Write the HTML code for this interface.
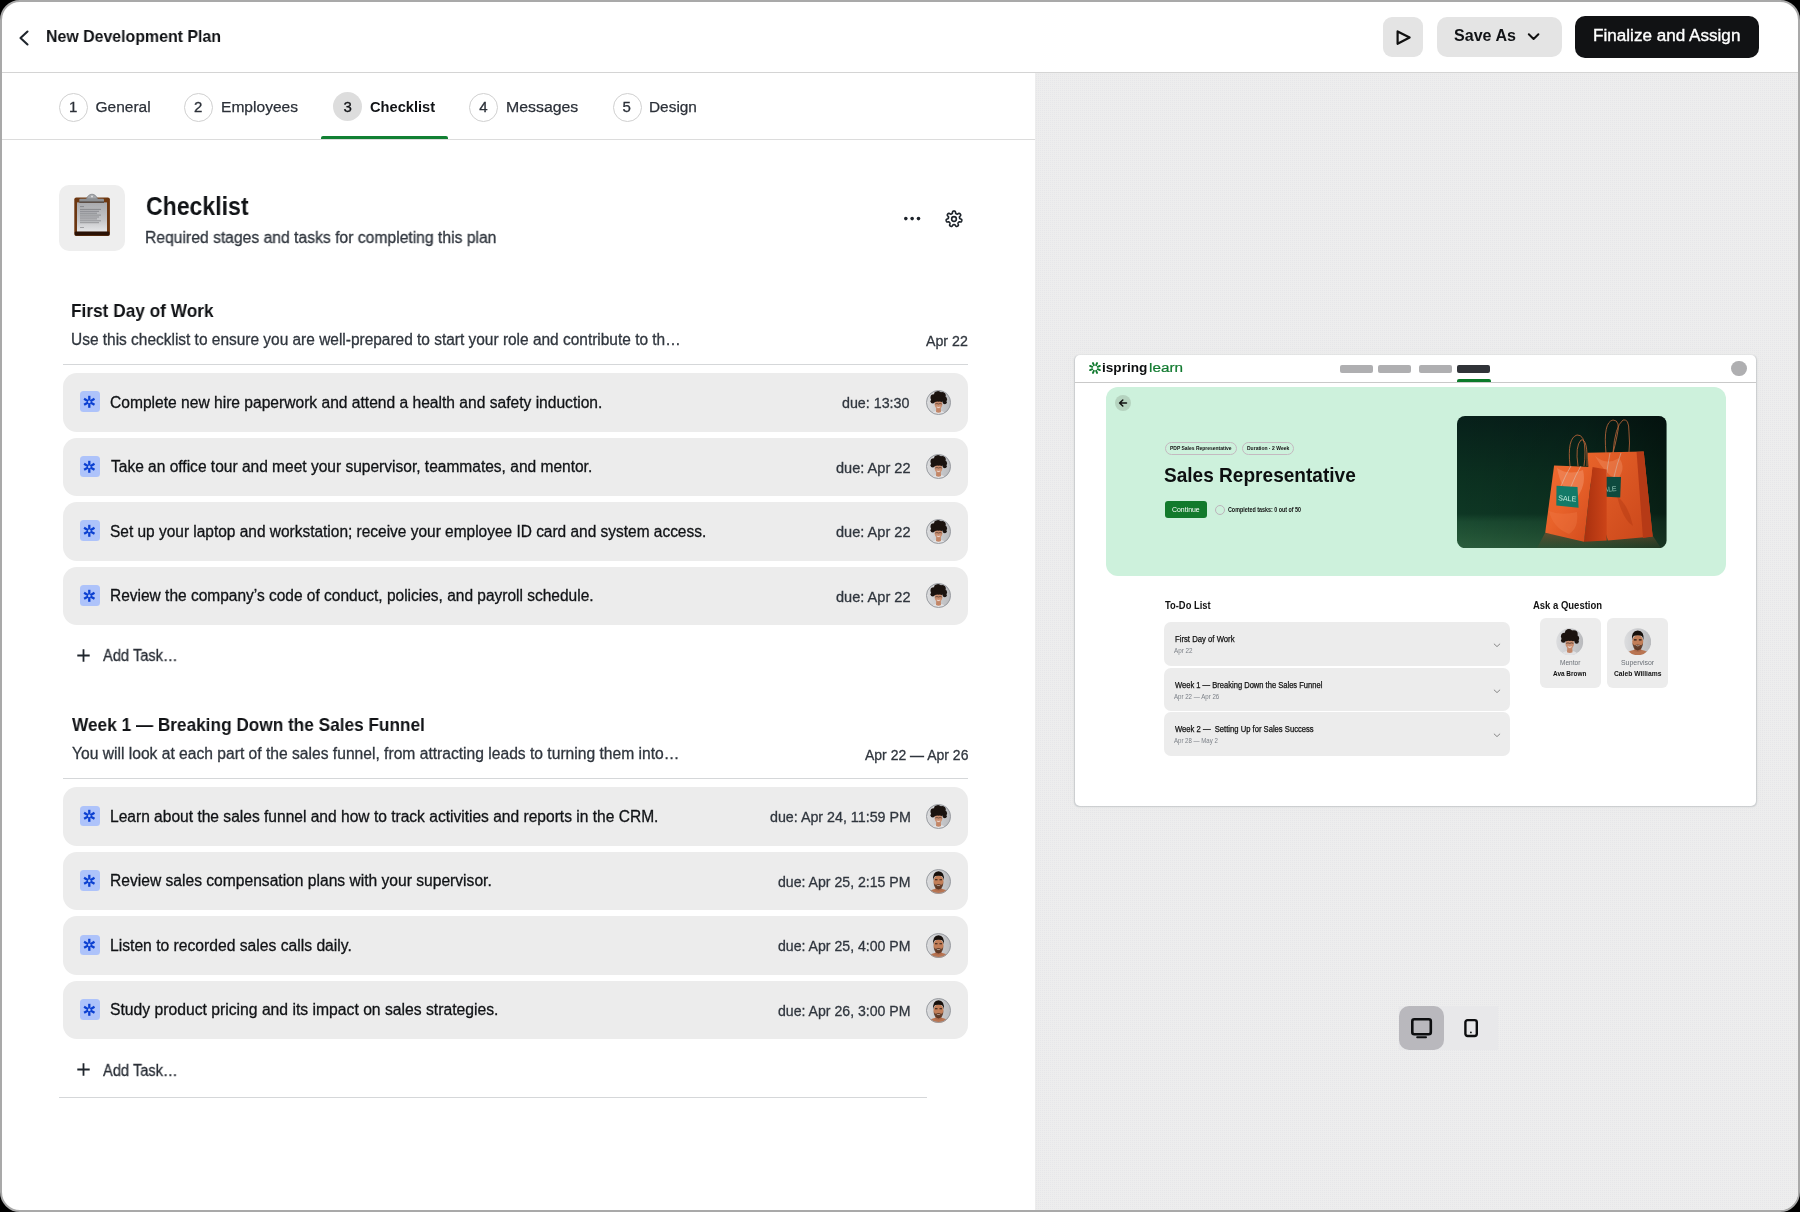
<!DOCTYPE html>
<html><head><meta charset="utf-8">
<style>
html,body{margin:0;padding:0;width:1800px;height:1212px;overflow:hidden;background:#000;}
body{font-family:"Liberation Sans",sans-serif;}
#frame{position:absolute;left:0;top:0;width:1800px;height:1212px;box-sizing:border-box;border:2px solid #a9a9a9;border-radius:20px;overflow:hidden;background:#fff;}
#root{position:absolute;left:-2px;top:-2px;width:1800px;height:1212px;will-change:transform;}
.t{position:absolute;white-space:pre;}
</style></head>
<body>
<div id="frame"><div id="root">
<div style="position:absolute;left:1035px;top:73px;width:765px;height:1139px;background-color:#ededed;background-image:linear-gradient(90deg,transparent 1px,#ededed 1px),linear-gradient(#e6e6e9 1px,#ededed 1px);background-size:2px 2px;background-position:1px 1px;"></div>
<div style="position:absolute;left:0px;top:72px;width:1800px;height:1px;background:#d4d4d4;border-radius:0;"></div>
<div style="position:absolute;left:0px;top:139px;width:1035px;height:1px;background:#dcdcdc;border-radius:0;"></div>
<svg style="position:absolute;left:16px;top:28px;" width="16" height="20" viewBox="0 0 16 20"><polyline points="11.5,3.5 4.5,10 11.5,16.5" fill="none" stroke="#1f252c" stroke-width="2.1" stroke-linecap="round" stroke-linejoin="round"/></svg>
<div style="position:absolute;left:1383px;top:17px;width:40px;height:40px;background:#e4e4e4;border-radius:9px;"></div>
<svg style="position:absolute;left:1390px;top:24px;" width="26" height="26" viewBox="0 0 26 26"><path d="M7.6,7.4 L19.6,13.5 L7.6,19.8 Z" fill="none" stroke="#111" stroke-width="2.2" stroke-linejoin="round"/></svg>
<div style="position:absolute;left:1437px;top:17px;width:125px;height:40px;background:#e4e4e4;border-radius:10px;"></div>
<svg style="position:absolute;left:1524px;top:29px;" width="20" height="16" viewBox="0 0 20 16"><polyline points="4.8,5.2 9.6,10 14.4,5.2" fill="none" stroke="#111" stroke-width="2" stroke-linecap="round" stroke-linejoin="round"/></svg>
<div style="position:absolute;left:1575px;top:16px;width:184px;height:42px;background:#111214;border-radius:10px;"></div>
<div style="position:absolute;left:59.0px;top:92.5px;width:29px;height:29px;box-sizing:border-box;border-radius:50%;border:1px solid #cfcfcf;"></div>
<div style="position:absolute;left:184.0px;top:92.5px;width:29px;height:29px;box-sizing:border-box;border-radius:50%;border:1px solid #cfcfcf;"></div>
<div style="position:absolute;left:333.0px;top:92.1px;width:29px;height:29px;border-radius:50%;background:#dddddd;"></div>
<div style="position:absolute;left:468.8px;top:92.5px;width:29px;height:29px;box-sizing:border-box;border-radius:50%;border:1px solid #cfcfcf;"></div>
<div style="position:absolute;left:612.6px;top:92.5px;width:29px;height:29px;box-sizing:border-box;border-radius:50%;border:1px solid #cfcfcf;"></div>
<div style="position:absolute;left:320.7px;top:136.3px;width:127.5px;height:3.2px;background:#118033;border-radius:2px 2px 0 0;"></div>
<div style="position:absolute;left:59px;top:185px;width:66px;height:66px;background:#eeeeee;border-radius:10px;"></div>
<svg style="position:absolute;left:59px;top:185px;" width="66" height="66" viewBox="0 0 66 66">
<defs><linearGradient id="brd" x1="0" y1="0" x2="1" y2="0"><stop offset="0" stop-color="#6a3510"/><stop offset="0.5" stop-color="#7e4416"/><stop offset="1" stop-color="#6a3510"/></linearGradient>
<linearGradient id="ppr" x1="0" y1="0" x2="0" y2="1"><stop offset="0" stop-color="#a9aaae"/><stop offset="0.6" stop-color="#c4c5c8"/><stop offset="1" stop-color="#e6e7e9"/></linearGradient></defs>
<rect x="15.3" y="12.4" width="35.6" height="38.5" rx="2" fill="url(#brd)"/>
<rect x="18" y="17.4" width="30" height="29.5" fill="url(#ppr)"/>
<rect x="15.8" y="46.6" width="34.6" height="4" rx="1" fill="#2a1206"/>
<g stroke="#55575c" stroke-width="0.55" opacity="0.85">
<line x1="21" y1="21.6" x2="25" y2="21.6"/><line x1="21" y1="24.40" x2="42" y2="24.40"/><line x1="21" y1="26.30" x2="40" y2="26.30"/><line x1="21" y1="28.20" x2="38" y2="28.20"/><line x1="21" y1="30.10" x2="42" y2="30.10"/><line x1="21" y1="32.00" x2="40" y2="32.00"/><line x1="21" y1="33.90" x2="38" y2="33.90"/><line x1="21" y1="35.80" x2="42" y2="35.80"/><line x1="21" y1="37.70" x2="40" y2="37.70"/><line x1="21" y1="42.6" x2="25" y2="42.6"/>
</g>
<path d="M27.4,14 Q29,9.4 33,9.2 Q37,9.4 38.6,14 Z" fill="#a4a7ab" stroke="#6f7277" stroke-width="0.6"/>
<circle cx="33" cy="11.6" r="1" fill="#e0e0e0"/>
<rect x="20.3" y="13.7" width="24.7" height="3.7" rx="1" fill="#8d9094"/>
<rect x="20.3" y="16.6" width="24.7" height="1" fill="#3a2a20"/>
</svg>
<svg style="position:absolute;left:900px;top:212px;" width="24" height="14" viewBox="0 0 24 14"><circle cx="5.8" cy="6.6" r="1.8" fill="#1d232a"/><circle cx="12.149999999999999" cy="6.6" r="1.8" fill="#1d232a"/><circle cx="18.5" cy="6.6" r="1.8" fill="#1d232a"/></svg>
<svg style="position:absolute;left:943.7px;top:208.7px;" width="20" height="20" viewBox="0 0 20 20"><path d="M16.80,10.00 L17.19,10.16 L17.49,10.34 L17.68,10.52 L17.78,10.70 L17.83,10.88 L17.84,11.06 L17.84,11.24 L17.82,11.42 L17.79,11.59 L17.75,11.77 L17.71,11.94 L17.66,12.11 L17.60,12.28 L17.53,12.45 L17.44,12.60 L17.32,12.75 L17.14,12.87 L16.89,12.95 L16.55,12.97 L16.13,12.95 L15.71,12.91 L15.37,12.89 L15.13,12.91 L14.97,12.97 L14.84,13.04 L14.75,13.13 L14.66,13.23 L14.58,13.32 L14.50,13.42 L14.42,13.52 L14.34,13.62 L14.26,13.72 L14.18,13.82 L14.11,13.93 L14.05,14.05 L14.00,14.18 L13.98,14.36 L14.02,14.60 L14.11,14.92 L14.24,15.32 L14.36,15.72 L14.41,16.07 L14.38,16.33 L14.30,16.52 L14.19,16.67 L14.06,16.79 L13.91,16.90 L13.76,16.99 L13.61,17.08 L13.45,17.16 L13.29,17.24 L13.12,17.30 L12.95,17.36 L12.78,17.41 L12.60,17.44 L12.41,17.43 L12.21,17.37 L11.99,17.23 L11.76,16.97 L11.51,16.63 L11.29,16.28 L11.09,16.00 L10.92,15.83 L10.78,15.73 L10.64,15.69 L10.51,15.66 L10.38,15.65 L10.25,15.65 L10.13,15.65 L10.00,15.65 L9.87,15.65 L9.75,15.65 L9.62,15.65 L9.49,15.66 L9.36,15.69 L9.22,15.73 L9.08,15.83 L8.91,16.00 L8.71,16.28 L8.49,16.63 L8.24,16.97 L8.01,17.23 L7.79,17.37 L7.59,17.43 L7.40,17.44 L7.22,17.41 L7.05,17.36 L6.88,17.30 L6.71,17.24 L6.55,17.16 L6.39,17.08 L6.24,16.99 L6.09,16.90 L5.94,16.79 L5.81,16.67 L5.70,16.52 L5.62,16.33 L5.59,16.07 L5.64,15.72 L5.76,15.32 L5.89,14.92 L5.98,14.60 L6.02,14.36 L6.00,14.18 L5.95,14.05 L5.89,13.93 L5.82,13.82 L5.74,13.72 L5.66,13.62 L5.58,13.52 L5.50,13.42 L5.42,13.32 L5.34,13.23 L5.25,13.13 L5.16,13.04 L5.03,12.97 L4.87,12.91 L4.63,12.89 L4.29,12.91 L3.87,12.95 L3.45,12.97 L3.11,12.95 L2.86,12.87 L2.68,12.75 L2.56,12.60 L2.47,12.45 L2.40,12.28 L2.34,12.11 L2.29,11.94 L2.25,11.77 L2.21,11.59 L2.18,11.42 L2.16,11.24 L2.16,11.06 L2.17,10.88 L2.22,10.70 L2.32,10.52 L2.51,10.34 L2.81,10.16 L3.20,10.00 L3.59,9.86 L3.90,9.73 L4.11,9.60 L4.24,9.48 L4.31,9.36 L4.36,9.24 L4.40,9.11 L4.43,8.99 L4.46,8.87 L4.49,8.74 L4.52,8.62 L4.55,8.50 L4.57,8.37 L4.59,8.24 L4.60,8.11 L4.58,7.97 L4.52,7.80 L4.39,7.60 L4.16,7.35 L3.87,7.05 L3.59,6.74 L3.40,6.45 L3.31,6.20 L3.29,5.99 L3.33,5.81 L3.40,5.64 L3.48,5.48 L3.57,5.33 L3.68,5.18 L3.78,5.04 L3.90,4.91 L4.02,4.77 L4.14,4.65 L4.28,4.53 L4.43,4.43 L4.60,4.35 L4.81,4.32 L5.07,4.35 L5.39,4.48 L5.76,4.68 L6.12,4.90 L6.41,5.06 L6.64,5.15 L6.81,5.17 L6.96,5.16 L7.08,5.12 L7.20,5.07 L7.32,5.02 L7.43,4.96 L7.55,4.91 L7.66,4.85 L7.78,4.80 L7.89,4.74 L8.00,4.68 L8.11,4.60 L8.21,4.50 L8.30,4.35 L8.38,4.12 L8.43,3.78 L8.49,3.37 L8.56,2.96 L8.66,2.62 L8.80,2.40 L8.95,2.26 L9.12,2.17 L9.29,2.12 L9.47,2.09 L9.64,2.06 L9.82,2.05 L10.00,2.05 L10.18,2.05 L10.36,2.06 L10.53,2.09 L10.71,2.12 L10.88,2.17 L11.05,2.26 L11.20,2.40 L11.34,2.62 L11.44,2.96 L11.51,3.37 L11.57,3.78 L11.62,4.12 L11.70,4.35 L11.79,4.50 L11.89,4.60 L12.00,4.68 L12.11,4.74 L12.22,4.80 L12.34,4.85 L12.45,4.91 L12.57,4.96 L12.68,5.02 L12.80,5.07 L12.92,5.12 L13.04,5.16 L13.19,5.17 L13.36,5.15 L13.59,5.06 L13.88,4.90 L14.24,4.68 L14.61,4.48 L14.93,4.35 L15.19,4.32 L15.40,4.35 L15.57,4.43 L15.72,4.53 L15.86,4.65 L15.98,4.77 L16.10,4.91 L16.22,5.04 L16.32,5.18 L16.43,5.33 L16.52,5.48 L16.60,5.64 L16.67,5.81 L16.71,5.99 L16.69,6.20 L16.60,6.45 L16.41,6.74 L16.13,7.05 L15.84,7.35 L15.61,7.60 L15.48,7.80 L15.42,7.97 L15.40,8.11 L15.41,8.24 L15.43,8.37 L15.45,8.50 L15.48,8.62 L15.51,8.74 L15.54,8.87 L15.57,8.99 L15.60,9.11 L15.64,9.24 L15.69,9.36 L15.76,9.48 L15.89,9.60 L16.10,9.73 L16.41,9.86 Z" fill="none" stroke="#1d232a" stroke-width="1.6" stroke-linejoin="round"/><circle cx="10" cy="10" r="2.35" fill="none" stroke="#1d232a" stroke-width="1.6"/></svg>
<div style="position:absolute;left:63px;top:364px;width:905px;height:1px;background:#d5d7d9;border-radius:0;"></div>
<div style="position:absolute;left:63px;top:373.2px;width:905px;height:58.4px;background:#ececec;border-radius:14px;"></div>
<div style="position:absolute;left:79.7px;top:391.4px;width:20.5px;height:20.6px;background:#aec3fa;border-radius:3.5px;"></div>
<svg style="position:absolute;left:79.6px;top:391.2px;" width="20.6" height="21" viewBox="0 0 20.6 21"><g stroke="#0a3fd1" stroke-width="2.3" stroke-linecap="butt"><line x1="9.30" y1="12.10" x2="9.30" y2="16.80"/><line x1="8.17" y1="11.45" x2="4.10" y2="13.80"/><line x1="8.17" y1="10.15" x2="4.10" y2="7.80"/><line x1="9.30" y1="9.50" x2="9.30" y2="4.80"/><line x1="10.43" y1="10.15" x2="14.50" y2="7.80"/><line x1="10.43" y1="11.45" x2="14.50" y2="13.80"/></g></svg>
<svg style="position:absolute;left:926.3px;top:389.9px;" width="25" height="25" viewBox="0 0 100 100"><defs><linearGradient id="ag1" x1="0" y1="0" x2="1" y2="0"><stop offset="0" stop-color="#dcdddf"/><stop offset="1" stop-color="#b9babd"/></linearGradient><clipPath id="ac1"><circle cx="50" cy="50" r="49"/></clipPath></defs><g clip-path="url(#ac1)"><rect width="100" height="100" fill="url(#ag1)"/>
<path d="M18,100 Q24,86 40,84 L60,84 Q76,86 82,100 Z" fill="#e2e2e4"/>
<path d="M41,68 L59,68 L60,88 Q50,93 40,88 Z" fill="#c28566"/>
<ellipse cx="50" cy="57" rx="15.5" ry="18" fill="#c98e70"/>
<g fill="#1b130f"><circle cx="31" cy="30" r="13"/><circle cx="47" cy="19" r="15"/><circle cx="65" cy="22" r="14"/><circle cx="73" cy="37" r="11"/><circle cx="27" cy="45" r="9"/><circle cx="75" cy="49" r="8"/><circle cx="50" cy="35" r="12"/><circle cx="38" cy="40" r="8"/><circle cx="62" cy="40" r="8"/></g>
<path d="M37,56 Q43.5,52 50,56 Q56.5,52 63,56" fill="none" stroke="#3a2a22" stroke-width="2.5"/>
<path d="M43,68 Q50,73 57,68 Q50,70.5 43,68 Z" fill="#fff" stroke="#f3e9e4" stroke-width="1.5"/></g><circle cx="50" cy="50" r="48" fill="none" stroke="#9a9da2" stroke-width="4"/></svg>
<div style="position:absolute;left:63px;top:437.73px;width:905px;height:58.4px;background:#ececec;border-radius:14px;"></div>
<div style="position:absolute;left:79.7px;top:455.93px;width:20.5px;height:20.6px;background:#aec3fa;border-radius:3.5px;"></div>
<svg style="position:absolute;left:79.6px;top:455.73px;" width="20.6" height="21" viewBox="0 0 20.6 21"><g stroke="#0a3fd1" stroke-width="2.3" stroke-linecap="butt"><line x1="9.30" y1="12.10" x2="9.30" y2="16.80"/><line x1="8.17" y1="11.45" x2="4.10" y2="13.80"/><line x1="8.17" y1="10.15" x2="4.10" y2="7.80"/><line x1="9.30" y1="9.50" x2="9.30" y2="4.80"/><line x1="10.43" y1="10.15" x2="14.50" y2="7.80"/><line x1="10.43" y1="11.45" x2="14.50" y2="13.80"/></g></svg>
<svg style="position:absolute;left:926.3px;top:454.43px;" width="25" height="25" viewBox="0 0 100 100"><defs><linearGradient id="ag2" x1="0" y1="0" x2="1" y2="0"><stop offset="0" stop-color="#dcdddf"/><stop offset="1" stop-color="#b9babd"/></linearGradient><clipPath id="ac2"><circle cx="50" cy="50" r="49"/></clipPath></defs><g clip-path="url(#ac2)"><rect width="100" height="100" fill="url(#ag2)"/>
<path d="M18,100 Q24,86 40,84 L60,84 Q76,86 82,100 Z" fill="#e2e2e4"/>
<path d="M41,68 L59,68 L60,88 Q50,93 40,88 Z" fill="#c28566"/>
<ellipse cx="50" cy="57" rx="15.5" ry="18" fill="#c98e70"/>
<g fill="#1b130f"><circle cx="31" cy="30" r="13"/><circle cx="47" cy="19" r="15"/><circle cx="65" cy="22" r="14"/><circle cx="73" cy="37" r="11"/><circle cx="27" cy="45" r="9"/><circle cx="75" cy="49" r="8"/><circle cx="50" cy="35" r="12"/><circle cx="38" cy="40" r="8"/><circle cx="62" cy="40" r="8"/></g>
<path d="M37,56 Q43.5,52 50,56 Q56.5,52 63,56" fill="none" stroke="#3a2a22" stroke-width="2.5"/>
<path d="M43,68 Q50,73 57,68 Q50,70.5 43,68 Z" fill="#fff" stroke="#f3e9e4" stroke-width="1.5"/></g><circle cx="50" cy="50" r="48" fill="none" stroke="#9a9da2" stroke-width="4"/></svg>
<div style="position:absolute;left:63px;top:502.26px;width:905px;height:58.4px;background:#ececec;border-radius:14px;"></div>
<div style="position:absolute;left:79.7px;top:520.46px;width:20.5px;height:20.6px;background:#aec3fa;border-radius:3.5px;"></div>
<svg style="position:absolute;left:79.6px;top:520.26px;" width="20.6" height="21" viewBox="0 0 20.6 21"><g stroke="#0a3fd1" stroke-width="2.3" stroke-linecap="butt"><line x1="9.30" y1="12.10" x2="9.30" y2="16.80"/><line x1="8.17" y1="11.45" x2="4.10" y2="13.80"/><line x1="8.17" y1="10.15" x2="4.10" y2="7.80"/><line x1="9.30" y1="9.50" x2="9.30" y2="4.80"/><line x1="10.43" y1="10.15" x2="14.50" y2="7.80"/><line x1="10.43" y1="11.45" x2="14.50" y2="13.80"/></g></svg>
<svg style="position:absolute;left:926.3px;top:518.96px;" width="25" height="25" viewBox="0 0 100 100"><defs><linearGradient id="ag3" x1="0" y1="0" x2="1" y2="0"><stop offset="0" stop-color="#dcdddf"/><stop offset="1" stop-color="#b9babd"/></linearGradient><clipPath id="ac3"><circle cx="50" cy="50" r="49"/></clipPath></defs><g clip-path="url(#ac3)"><rect width="100" height="100" fill="url(#ag3)"/>
<path d="M18,100 Q24,86 40,84 L60,84 Q76,86 82,100 Z" fill="#e2e2e4"/>
<path d="M41,68 L59,68 L60,88 Q50,93 40,88 Z" fill="#c28566"/>
<ellipse cx="50" cy="57" rx="15.5" ry="18" fill="#c98e70"/>
<g fill="#1b130f"><circle cx="31" cy="30" r="13"/><circle cx="47" cy="19" r="15"/><circle cx="65" cy="22" r="14"/><circle cx="73" cy="37" r="11"/><circle cx="27" cy="45" r="9"/><circle cx="75" cy="49" r="8"/><circle cx="50" cy="35" r="12"/><circle cx="38" cy="40" r="8"/><circle cx="62" cy="40" r="8"/></g>
<path d="M37,56 Q43.5,52 50,56 Q56.5,52 63,56" fill="none" stroke="#3a2a22" stroke-width="2.5"/>
<path d="M43,68 Q50,73 57,68 Q50,70.5 43,68 Z" fill="#fff" stroke="#f3e9e4" stroke-width="1.5"/></g><circle cx="50" cy="50" r="48" fill="none" stroke="#9a9da2" stroke-width="4"/></svg>
<div style="position:absolute;left:63px;top:566.79px;width:905px;height:58.4px;background:#ececec;border-radius:14px;"></div>
<div style="position:absolute;left:79.7px;top:584.99px;width:20.5px;height:20.6px;background:#aec3fa;border-radius:3.5px;"></div>
<svg style="position:absolute;left:79.6px;top:584.79px;" width="20.6" height="21" viewBox="0 0 20.6 21"><g stroke="#0a3fd1" stroke-width="2.3" stroke-linecap="butt"><line x1="9.30" y1="12.10" x2="9.30" y2="16.80"/><line x1="8.17" y1="11.45" x2="4.10" y2="13.80"/><line x1="8.17" y1="10.15" x2="4.10" y2="7.80"/><line x1="9.30" y1="9.50" x2="9.30" y2="4.80"/><line x1="10.43" y1="10.15" x2="14.50" y2="7.80"/><line x1="10.43" y1="11.45" x2="14.50" y2="13.80"/></g></svg>
<svg style="position:absolute;left:926.3px;top:583.49px;" width="25" height="25" viewBox="0 0 100 100"><defs><linearGradient id="ag4" x1="0" y1="0" x2="1" y2="0"><stop offset="0" stop-color="#dcdddf"/><stop offset="1" stop-color="#b9babd"/></linearGradient><clipPath id="ac4"><circle cx="50" cy="50" r="49"/></clipPath></defs><g clip-path="url(#ac4)"><rect width="100" height="100" fill="url(#ag4)"/>
<path d="M18,100 Q24,86 40,84 L60,84 Q76,86 82,100 Z" fill="#e2e2e4"/>
<path d="M41,68 L59,68 L60,88 Q50,93 40,88 Z" fill="#c28566"/>
<ellipse cx="50" cy="57" rx="15.5" ry="18" fill="#c98e70"/>
<g fill="#1b130f"><circle cx="31" cy="30" r="13"/><circle cx="47" cy="19" r="15"/><circle cx="65" cy="22" r="14"/><circle cx="73" cy="37" r="11"/><circle cx="27" cy="45" r="9"/><circle cx="75" cy="49" r="8"/><circle cx="50" cy="35" r="12"/><circle cx="38" cy="40" r="8"/><circle cx="62" cy="40" r="8"/></g>
<path d="M37,56 Q43.5,52 50,56 Q56.5,52 63,56" fill="none" stroke="#3a2a22" stroke-width="2.5"/>
<path d="M43,68 Q50,73 57,68 Q50,70.5 43,68 Z" fill="#fff" stroke="#f3e9e4" stroke-width="1.5"/></g><circle cx="50" cy="50" r="48" fill="none" stroke="#9a9da2" stroke-width="4"/></svg>
<svg style="position:absolute;left:76.6px;top:649.2px;" width="13" height="13" viewBox="0 0 13 13"><path d="M6.5,0.3 V12.7 M0.3,6.5 H12.7" stroke="#1f252c" stroke-width="1.8"/></svg>
<div style="position:absolute;left:63px;top:778.2px;width:905px;height:1px;background:#d5d7d9;border-radius:0;"></div>
<div style="position:absolute;left:63px;top:787.4px;width:905px;height:58.4px;background:#ececec;border-radius:14px;"></div>
<div style="position:absolute;left:79.7px;top:805.6px;width:20.5px;height:20.6px;background:#aec3fa;border-radius:3.5px;"></div>
<svg style="position:absolute;left:79.6px;top:805.4px;" width="20.6" height="21" viewBox="0 0 20.6 21"><g stroke="#0a3fd1" stroke-width="2.3" stroke-linecap="butt"><line x1="9.30" y1="12.10" x2="9.30" y2="16.80"/><line x1="8.17" y1="11.45" x2="4.10" y2="13.80"/><line x1="8.17" y1="10.15" x2="4.10" y2="7.80"/><line x1="9.30" y1="9.50" x2="9.30" y2="4.80"/><line x1="10.43" y1="10.15" x2="14.50" y2="7.80"/><line x1="10.43" y1="11.45" x2="14.50" y2="13.80"/></g></svg>
<svg style="position:absolute;left:926.3px;top:804.1px;" width="25" height="25" viewBox="0 0 100 100"><defs><linearGradient id="ag5" x1="0" y1="0" x2="1" y2="0"><stop offset="0" stop-color="#dcdddf"/><stop offset="1" stop-color="#b9babd"/></linearGradient><clipPath id="ac5"><circle cx="50" cy="50" r="49"/></clipPath></defs><g clip-path="url(#ac5)"><rect width="100" height="100" fill="url(#ag5)"/>
<path d="M18,100 Q24,86 40,84 L60,84 Q76,86 82,100 Z" fill="#e2e2e4"/>
<path d="M41,68 L59,68 L60,88 Q50,93 40,88 Z" fill="#c28566"/>
<ellipse cx="50" cy="57" rx="15.5" ry="18" fill="#c98e70"/>
<g fill="#1b130f"><circle cx="31" cy="30" r="13"/><circle cx="47" cy="19" r="15"/><circle cx="65" cy="22" r="14"/><circle cx="73" cy="37" r="11"/><circle cx="27" cy="45" r="9"/><circle cx="75" cy="49" r="8"/><circle cx="50" cy="35" r="12"/><circle cx="38" cy="40" r="8"/><circle cx="62" cy="40" r="8"/></g>
<path d="M37,56 Q43.5,52 50,56 Q56.5,52 63,56" fill="none" stroke="#3a2a22" stroke-width="2.5"/>
<path d="M43,68 Q50,73 57,68 Q50,70.5 43,68 Z" fill="#fff" stroke="#f3e9e4" stroke-width="1.5"/></g><circle cx="50" cy="50" r="48" fill="none" stroke="#9a9da2" stroke-width="4"/></svg>
<div style="position:absolute;left:63px;top:851.93px;width:905px;height:58.4px;background:#ececec;border-radius:14px;"></div>
<div style="position:absolute;left:79.7px;top:870.13px;width:20.5px;height:20.6px;background:#aec3fa;border-radius:3.5px;"></div>
<svg style="position:absolute;left:79.6px;top:869.93px;" width="20.6" height="21" viewBox="0 0 20.6 21"><g stroke="#0a3fd1" stroke-width="2.3" stroke-linecap="butt"><line x1="9.30" y1="12.10" x2="9.30" y2="16.80"/><line x1="8.17" y1="11.45" x2="4.10" y2="13.80"/><line x1="8.17" y1="10.15" x2="4.10" y2="7.80"/><line x1="9.30" y1="9.50" x2="9.30" y2="4.80"/><line x1="10.43" y1="10.15" x2="14.50" y2="7.80"/><line x1="10.43" y1="11.45" x2="14.50" y2="13.80"/></g></svg>
<svg style="position:absolute;left:926.3px;top:868.63px;" width="25" height="25" viewBox="0 0 100 100"><defs><linearGradient id="ag6" x1="0" y1="0" x2="1" y2="0"><stop offset="0" stop-color="#dcdddf"/><stop offset="1" stop-color="#b9babd"/></linearGradient><clipPath id="ac6"><circle cx="50" cy="50" r="49"/></clipPath></defs><g clip-path="url(#ac6)"><rect width="100" height="100" fill="url(#ag6)"/>
<path d="M8,100 Q12,84 34,80 L66,80 Q88,84 92,100 Z" fill="#b97552"/>
<path d="M38,66 L62,66 L63,84 Q50,90 37,84 Z" fill="#a9684a"/>
<ellipse cx="50" cy="50" rx="20" ry="25" fill="#c27e58"/>
<path d="M29,46 Q25,10 50,9 Q75,10 71,46 Q69,30 62,28 Q50,25 38,28 Q31,30 29,46 Z" fill="#17100c"/>
<path d="M36,43 L46,43 M54,43 L64,43" stroke="#2a1a12" stroke-width="4"/>
<path d="M31,52 Q30,78 50,82 Q70,78 69,52 Q67,66 60,62 Q50,58 40,62 Q33,66 31,52 Z" fill="#3a2216" opacity="0.7"/>
<path d="M41,63 Q50,70 59,63 Q50,66 41,63 Z" fill="#f4eeea"/></g><circle cx="50" cy="50" r="48" fill="none" stroke="#9a9da2" stroke-width="4"/></svg>
<div style="position:absolute;left:63px;top:916.46px;width:905px;height:58.4px;background:#ececec;border-radius:14px;"></div>
<div style="position:absolute;left:79.7px;top:934.66px;width:20.5px;height:20.6px;background:#aec3fa;border-radius:3.5px;"></div>
<svg style="position:absolute;left:79.6px;top:934.46px;" width="20.6" height="21" viewBox="0 0 20.6 21"><g stroke="#0a3fd1" stroke-width="2.3" stroke-linecap="butt"><line x1="9.30" y1="12.10" x2="9.30" y2="16.80"/><line x1="8.17" y1="11.45" x2="4.10" y2="13.80"/><line x1="8.17" y1="10.15" x2="4.10" y2="7.80"/><line x1="9.30" y1="9.50" x2="9.30" y2="4.80"/><line x1="10.43" y1="10.15" x2="14.50" y2="7.80"/><line x1="10.43" y1="11.45" x2="14.50" y2="13.80"/></g></svg>
<svg style="position:absolute;left:926.3px;top:933.1600000000001px;" width="25" height="25" viewBox="0 0 100 100"><defs><linearGradient id="ag7" x1="0" y1="0" x2="1" y2="0"><stop offset="0" stop-color="#dcdddf"/><stop offset="1" stop-color="#b9babd"/></linearGradient><clipPath id="ac7"><circle cx="50" cy="50" r="49"/></clipPath></defs><g clip-path="url(#ac7)"><rect width="100" height="100" fill="url(#ag7)"/>
<path d="M8,100 Q12,84 34,80 L66,80 Q88,84 92,100 Z" fill="#b97552"/>
<path d="M38,66 L62,66 L63,84 Q50,90 37,84 Z" fill="#a9684a"/>
<ellipse cx="50" cy="50" rx="20" ry="25" fill="#c27e58"/>
<path d="M29,46 Q25,10 50,9 Q75,10 71,46 Q69,30 62,28 Q50,25 38,28 Q31,30 29,46 Z" fill="#17100c"/>
<path d="M36,43 L46,43 M54,43 L64,43" stroke="#2a1a12" stroke-width="4"/>
<path d="M31,52 Q30,78 50,82 Q70,78 69,52 Q67,66 60,62 Q50,58 40,62 Q33,66 31,52 Z" fill="#3a2216" opacity="0.7"/>
<path d="M41,63 Q50,70 59,63 Q50,66 41,63 Z" fill="#f4eeea"/></g><circle cx="50" cy="50" r="48" fill="none" stroke="#9a9da2" stroke-width="4"/></svg>
<div style="position:absolute;left:63px;top:980.99px;width:905px;height:58.4px;background:#ececec;border-radius:14px;"></div>
<div style="position:absolute;left:79.7px;top:999.19px;width:20.5px;height:20.6px;background:#aec3fa;border-radius:3.5px;"></div>
<svg style="position:absolute;left:79.6px;top:998.99px;" width="20.6" height="21" viewBox="0 0 20.6 21"><g stroke="#0a3fd1" stroke-width="2.3" stroke-linecap="butt"><line x1="9.30" y1="12.10" x2="9.30" y2="16.80"/><line x1="8.17" y1="11.45" x2="4.10" y2="13.80"/><line x1="8.17" y1="10.15" x2="4.10" y2="7.80"/><line x1="9.30" y1="9.50" x2="9.30" y2="4.80"/><line x1="10.43" y1="10.15" x2="14.50" y2="7.80"/><line x1="10.43" y1="11.45" x2="14.50" y2="13.80"/></g></svg>
<svg style="position:absolute;left:926.3px;top:997.69px;" width="25" height="25" viewBox="0 0 100 100"><defs><linearGradient id="ag8" x1="0" y1="0" x2="1" y2="0"><stop offset="0" stop-color="#dcdddf"/><stop offset="1" stop-color="#b9babd"/></linearGradient><clipPath id="ac8"><circle cx="50" cy="50" r="49"/></clipPath></defs><g clip-path="url(#ac8)"><rect width="100" height="100" fill="url(#ag8)"/>
<path d="M8,100 Q12,84 34,80 L66,80 Q88,84 92,100 Z" fill="#b97552"/>
<path d="M38,66 L62,66 L63,84 Q50,90 37,84 Z" fill="#a9684a"/>
<ellipse cx="50" cy="50" rx="20" ry="25" fill="#c27e58"/>
<path d="M29,46 Q25,10 50,9 Q75,10 71,46 Q69,30 62,28 Q50,25 38,28 Q31,30 29,46 Z" fill="#17100c"/>
<path d="M36,43 L46,43 M54,43 L64,43" stroke="#2a1a12" stroke-width="4"/>
<path d="M31,52 Q30,78 50,82 Q70,78 69,52 Q67,66 60,62 Q50,58 40,62 Q33,66 31,52 Z" fill="#3a2216" opacity="0.7"/>
<path d="M41,63 Q50,70 59,63 Q50,66 41,63 Z" fill="#f4eeea"/></g><circle cx="50" cy="50" r="48" fill="none" stroke="#9a9da2" stroke-width="4"/></svg>
<svg style="position:absolute;left:76.6px;top:1063.4px;" width="13" height="13" viewBox="0 0 13 13"><path d="M6.5,0.3 V12.7 M0.3,6.5 H12.7" stroke="#1f252c" stroke-width="1.8"/></svg>
<div style="position:absolute;left:59px;top:1097px;width:868px;height:1px;background:#d5d7d9;border-radius:0;"></div>
<div style="position:absolute;left:1074.7px;top:355.2px;width:681.5px;height:450.8px;background:#fff;border-radius:5px;box-shadow:0 0.5px 1.5px 0.5px rgba(70,80,90,0.22),0 0 5px 2px rgba(236,236,236,0.9);"></div>
<div style="position:absolute;left:1074.7px;top:382.2px;width:681.5px;height:1px;background:#c9c9c9;border-radius:0;"></div>
<svg style="position:absolute;left:1089.2px;top:361.8px;" width="12" height="12" viewBox="0 0 12 12"><g stroke="#127a30" stroke-width="1.9" stroke-linecap="round"><line x1="8.77" y1="7.15" x2="10.90" y2="8.03"/><line x1="7.15" y1="8.77" x2="8.03" y2="10.90"/><line x1="4.85" y1="8.77" x2="3.97" y2="10.90"/><line x1="3.23" y1="7.15" x2="1.10" y2="8.03"/><line x1="3.23" y1="4.85" x2="1.10" y2="3.97"/><line x1="4.85" y1="3.23" x2="3.97" y2="1.10"/><line x1="7.15" y1="3.23" x2="8.03" y2="1.10"/><line x1="8.77" y1="4.85" x2="10.90" y2="3.97"/></g></svg>
<div style="position:absolute;left:1340.2px;top:365.3px;width:32.8px;height:7.4px;background:#afafb1;border-radius:2px;"></div>
<div style="position:absolute;left:1378.2px;top:365.3px;width:32.8px;height:7.4px;background:#afafb1;border-radius:2px;"></div>
<div style="position:absolute;left:1419px;top:365.3px;width:32.8px;height:7.4px;background:#afafb1;border-radius:2px;"></div>
<div style="position:absolute;left:1457px;top:365.3px;width:33px;height:7.4px;background:#303338;border-radius:2px;"></div>
<div style="position:absolute;left:1457px;top:379.4px;width:34px;height:3px;background:#0b7a2a;border-radius:2px 2px 0 0;"></div>
<div style="position:absolute;left:1731.2px;top:360.5px;width:15.5px;height:15.5px;border-radius:50%;background:#afafb1;"></div>
<div style="position:absolute;left:1106.2px;top:387px;width:619.7px;height:188.8px;background:#cdf1dc;border-radius:12px;"></div>
<div style="position:absolute;left:1115.2px;top:395.2px;width:16px;height:16px;border-radius:50%;background:#b5d3bf;"></div>
<svg style="position:absolute;left:1115.2px;top:395.2px;" width="16" height="16" viewBox="0 0 16 16"><path d="M11.5,8 H4.8 M7.8,5 L4.6,8 L7.8,11" fill="none" stroke="#111" stroke-width="1.5" stroke-linecap="round" stroke-linejoin="round"/></svg>
<div style="position:absolute;left:1164.9px;top:442.2px;width:72.1px;height:12.4px;box-sizing:border-box;border-radius:7px;border:1px solid #c4b9c0;"></div>
<div style="position:absolute;left:1241.9px;top:442.2px;width:52.3px;height:12.4px;box-sizing:border-box;border-radius:7px;border:1px solid #c4b9c0;"></div>
<div style="position:absolute;left:1164.9px;top:500.9px;width:42px;height:17px;background:#127a2c;border-radius:3px;"></div>
<div style="position:absolute;left:1215px;top:505px;width:10px;height:10px;box-sizing:border-box;border-radius:50%;border:1.4px solid #bdb3bb;"></div>
<svg style="position:absolute;left:1457px;top:415.8px;" width="209.7" height="132.2" viewBox="0 0 209.7 132.2">
<defs>
<clipPath id="imgc"><rect x="0" y="0" width="209.7" height="132.2" rx="8"/></clipPath>
<linearGradient id="bgv" x1="0" y1="0" x2="0" y2="1"><stop offset="0" stop-color="#07201a"/><stop offset="0.45" stop-color="#0b3020"/><stop offset="0.74" stop-color="#0e3724"/><stop offset="0.8" stop-color="#1a4a30"/><stop offset="1" stop-color="#2a5d3c"/></linearGradient>
<linearGradient id="bgh" x1="0" y1="0" x2="1" y2="0"><stop offset="0" stop-color="#000" stop-opacity="0"/><stop offset="0.6" stop-color="#000" stop-opacity="0.15"/><stop offset="1" stop-color="#000" stop-opacity="0.45"/></linearGradient>
<linearGradient id="bagf" x1="0" y1="0" x2="1" y2="1"><stop offset="0" stop-color="#ee6a30"/><stop offset="0.45" stop-color="#e8622a"/><stop offset="1" stop-color="#d24a1c"/></linearGradient>
<linearGradient id="bags" x1="0" y1="0" x2="1" y2="0"><stop offset="0" stop-color="#a8300f"/><stop offset="1" stop-color="#cc4418"/></linearGradient>
<linearGradient id="bagb" x1="0" y1="0" x2="1" y2="1"><stop offset="0" stop-color="#e8632a"/><stop offset="1" stop-color="#c9461a"/></linearGradient>
</defs>
<g clip-path="url(#imgc)">
<rect width="209.7" height="132.2" fill="url(#bgv)"/>
<rect width="209.7" height="132.2" fill="url(#bgh)"/>
<linearGradient id="refl" x1="0" y1="0" x2="0" y2="1"><stop offset="0" stop-color="#7a5030" stop-opacity="0.7"/><stop offset="1" stop-color="#4a4a2a" stop-opacity="0.2"/></linearGradient><path d="M88,117 Q140,126 196,120 L204,132.2 L80,132.2 Z" fill="url(#refl)"/>
<!-- back bag handles -->
<g fill="none" stroke="#c26a3c" stroke-width="0.8">
<path d="M149,37 Q146,6 156,4 Q164,4 160,20 Q158,30 156,37"/>
<path d="M156,37 Q158,10 166,4 Q172,2 172,16 Q173,28 172,36"/>
</g>
<path d="M130.6,36.8 L186.7,35.6 L195.7,120.4 L150.9,124.6 L132,62 Z" fill="url(#bagb)"/>
<path d="M179.6,36 L186.7,35.6 L195.7,120.4 L186,122 Z" fill="#b63a16"/>
<path d="M138,40 Q150,50 162,42 Q170,52 160,64 Q148,58 138,40 Z" fill="#f39a70" opacity="0.35"/>
<path d="M160,80 Q172,90 176,110 Q166,104 160,80 Z" fill="#a8300f" opacity="0.35"/>
<path d="M145.5,60.7 L164,61 L163.2,81.6 L145.3,80.5 Z" fill="#0e4a3e"/>
<text x="146.5" y="75.5" font-family="Liberation Sans" font-size="7" fill="#9fd2c2" transform="rotate(-3 150 75)">ALE</text>
<path d="M149,61 Q151,48 153,37 M157,61 Q160,48 164,37" fill="none" stroke="#cfc7bd" stroke-width="0.5"/>
<!-- front bag handles -->
<g fill="none" stroke="#c86a3a" stroke-width="0.8">
<path d="M113,50 Q110,22 120,19 Q128,18 128,36 Q128,44 127,50"/>
<path d="M121,50 Q118,30 124,24 Q131,22 130,50"/>
</g>
<path d="M135.4,51.1 L149.7,53.5 L149.7,124.6 L127,125.8 Z" fill="url(#bags)"/>
<path d="M97.1,49.4 L135.4,51.1 L127,125.8 L88.2,116.8 Z" fill="url(#bagf)"/>
<path d="M100,52 Q112,60 126,54 Q130,70 118,84 Q104,74 100,52 Z" fill="#f4a07a" opacity="0.4"/>
<path d="M92,95 Q104,100 120,96 Q122,112 112,118 Q96,112 92,95 Z" fill="#f07a48" opacity="0.35"/>
<path d="M99.5,69.7 L120.5,71 L121.6,91.8 L99.3,89.5 Z" fill="#137a68"/>
<text x="101" y="85" font-family="Liberation Sans" font-size="7.2" fill="#c6eede" transform="rotate(4 110 84)">SALE</text>
<path d="M104,70 Q109,58 114,50 M114,70.5 Q119,58 124,50" fill="none" stroke="#d6cec4" stroke-width="0.5"/>
</g>
</svg>
<div style="position:absolute;left:1164.1px;top:622.2px;width:346.4px;height:43.4px;background:#ececec;border-radius:7px;"></div>
<svg style="position:absolute;left:1490.5px;top:641.2px;" width="12" height="10" viewBox="0 0 12 10"><polyline points="3.2,3 6,5.6 8.8,3" fill="none" stroke="#888" stroke-width="1" stroke-linecap="round"/></svg>
<div style="position:absolute;left:1164.1px;top:667.6px;width:346.4px;height:43.4px;background:#ececec;border-radius:7px;"></div>
<svg style="position:absolute;left:1490.5px;top:686.6px;" width="12" height="10" viewBox="0 0 12 10"><polyline points="3.2,3 6,5.6 8.8,3" fill="none" stroke="#888" stroke-width="1" stroke-linecap="round"/></svg>
<div style="position:absolute;left:1164.1px;top:712.4px;width:346.4px;height:43.4px;background:#ececec;border-radius:7px;"></div>
<svg style="position:absolute;left:1490.5px;top:731.4px;" width="12" height="10" viewBox="0 0 12 10"><polyline points="3.2,3 6,5.6 8.8,3" fill="none" stroke="#888" stroke-width="1" stroke-linecap="round"/></svg>
<div style="position:absolute;left:1540.1px;top:618px;width:60.6px;height:70.2px;background:#ececec;border-radius:6px;"></div>
<svg style="position:absolute;left:1556.25px;top:627.75px;" width="27.5" height="27.5" viewBox="0 0 100 100"><defs><linearGradient id="ag9" x1="0" y1="0" x2="1" y2="0"><stop offset="0" stop-color="#dcdddf"/><stop offset="1" stop-color="#b9babd"/></linearGradient><clipPath id="ac9"><circle cx="50" cy="50" r="49"/></clipPath></defs><g clip-path="url(#ac9)"><rect width="100" height="100" fill="url(#ag9)"/>
<path d="M18,100 Q24,86 40,84 L60,84 Q76,86 82,100 Z" fill="#e2e2e4"/>
<path d="M41,68 L59,68 L60,88 Q50,93 40,88 Z" fill="#c28566"/>
<ellipse cx="50" cy="57" rx="15.5" ry="18" fill="#c98e70"/>
<g fill="#1b130f"><circle cx="31" cy="30" r="13"/><circle cx="47" cy="19" r="15"/><circle cx="65" cy="22" r="14"/><circle cx="73" cy="37" r="11"/><circle cx="27" cy="45" r="9"/><circle cx="75" cy="49" r="8"/><circle cx="50" cy="35" r="12"/><circle cx="38" cy="40" r="8"/><circle cx="62" cy="40" r="8"/></g>
<path d="M37,56 Q43.5,52 50,56 Q56.5,52 63,56" fill="none" stroke="#3a2a22" stroke-width="2.5"/>
<path d="M43,68 Q50,73 57,68 Q50,70.5 43,68 Z" fill="#fff" stroke="#f3e9e4" stroke-width="1.5"/></g></svg>
<div style="position:absolute;left:1607px;top:618px;width:60.6px;height:70.2px;background:#ececec;border-radius:6px;"></div>
<svg style="position:absolute;left:1623.95px;top:627.75px;" width="27.5" height="27.5" viewBox="0 0 100 100"><defs><linearGradient id="ag10" x1="0" y1="0" x2="1" y2="0"><stop offset="0" stop-color="#dcdddf"/><stop offset="1" stop-color="#b9babd"/></linearGradient><clipPath id="ac10"><circle cx="50" cy="50" r="49"/></clipPath></defs><g clip-path="url(#ac10)"><rect width="100" height="100" fill="url(#ag10)"/>
<path d="M8,100 Q12,84 34,80 L66,80 Q88,84 92,100 Z" fill="#b97552"/>
<path d="M38,66 L62,66 L63,84 Q50,90 37,84 Z" fill="#a9684a"/>
<ellipse cx="50" cy="50" rx="20" ry="25" fill="#c27e58"/>
<path d="M29,46 Q25,10 50,9 Q75,10 71,46 Q69,30 62,28 Q50,25 38,28 Q31,30 29,46 Z" fill="#17100c"/>
<path d="M36,43 L46,43 M54,43 L64,43" stroke="#2a1a12" stroke-width="4"/>
<path d="M31,52 Q30,78 50,82 Q70,78 69,52 Q67,66 60,62 Q50,58 40,62 Q33,66 31,52 Z" fill="#3a2216" opacity="0.7"/>
<path d="M41,63 Q50,70 59,63 Q50,66 41,63 Z" fill="#f4eeea"/></g></svg>
<div style="position:absolute;left:1399px;top:1005.6px;width:98.8px;height:44.7px;background:#e8e8ea;border-radius:0;"></div>
<div style="position:absolute;left:1399px;top:1005.6px;width:45px;height:44.7px;background:#b9b8bd;border-radius:10px;"></div>
<svg style="position:absolute;left:1405px;top:1012px;" width="34" height="32" viewBox="0 0 34 32"><rect x="7.3" y="7.2" width="18.5" height="15" rx="2" fill="none" stroke="#0d0e10" stroke-width="2.6"/><rect x="11.2" y="24.3" width="10.8" height="1.9" rx="0.9" fill="#0d0e10"/></svg>
<svg style="position:absolute;left:1455px;top:1012px;" width="32" height="32" viewBox="0 0 32 32"><rect x="10.4" y="8.1" width="11.4" height="15.9" rx="2.2" fill="none" stroke="#0d0e10" stroke-width="2.4"/><circle cx="15.9" cy="20.4" r="0.9" fill="#0d0e10"/></svg>
<div class="t" style="left:46.06px;top:28.0px;font-size:17px;line-height:17px;font-weight:700;color:#111316;transform:scaleX(0.9351);transform-origin:0 0;">New Development Plan</div>
<div class="t" style="left:1454.01px;top:27.0px;font-size:16.3px;line-height:16.3px;font-weight:700;color:#111316;transform:scaleX(0.9869);transform-origin:0 0;">Save As</div>
<div class="t" style="left:1592.65px;top:27.0px;font-size:16.3px;line-height:16.3px;font-weight:400;color:#ffffff;transform:scaleX(1.0507);transform-origin:0 0;-webkit-text-stroke:0.35px #fff;">Finalize and Assign</div>
<div class="t" style="left:69.00px;top:99.0px;font-size:15px;line-height:15px;font-weight:400;color:#2b3038;-webkit-text-stroke:0.3px #2b3038;">1</div>
<div class="t" style="left:95.50px;top:99.0px;font-size:15.5px;line-height:15.5px;font-weight:400;color:#2b3038;transform:scaleX(1.0000);transform-origin:0 0;-webkit-text-stroke:0.25px #2b3038;">General</div>
<div class="t" style="left:194.00px;top:99.0px;font-size:15px;line-height:15px;font-weight:400;color:#2b3038;-webkit-text-stroke:0.3px #2b3038;">2</div>
<div class="t" style="left:220.99px;top:99.0px;font-size:15.5px;line-height:15.5px;font-weight:400;color:#2b3038;transform:scaleX(1.0053);transform-origin:0 0;-webkit-text-stroke:0.25px #2b3038;">Employees</div>
<div class="t" style="left:343.50px;top:99.0px;font-size:15px;line-height:15px;font-weight:400;color:#111316;-webkit-text-stroke:0.3px #111316;">3</div>
<div class="t" style="left:369.76px;top:99.0px;font-size:15.5px;line-height:15.5px;font-weight:700;color:#111316;transform:scaleX(0.9441);transform-origin:0 0;">Checklist</div>
<div class="t" style="left:479.30px;top:99.0px;font-size:15px;line-height:15px;font-weight:400;color:#2b3038;-webkit-text-stroke:0.3px #2b3038;">4</div>
<div class="t" style="left:505.68px;top:99.0px;font-size:15.5px;line-height:15.5px;font-weight:400;color:#2b3038;transform:scaleX(1.0232);transform-origin:0 0;-webkit-text-stroke:0.25px #2b3038;">Messages</div>
<div class="t" style="left:622.60px;top:99.0px;font-size:15px;line-height:15px;font-weight:400;color:#2b3038;-webkit-text-stroke:0.3px #2b3038;">5</div>
<div class="t" style="left:649.41px;top:99.0px;font-size:15.5px;line-height:15.5px;font-weight:400;color:#2b3038;transform:scaleX(0.9936);transform-origin:0 0;-webkit-text-stroke:0.25px #2b3038;">Design</div>
<div class="t" style="left:146.01px;top:193.0px;font-size:26px;line-height:26px;font-weight:700;color:#111316;transform:scaleX(0.8870);transform-origin:0 0;">Checklist</div>
<div class="t" style="left:145.42px;top:230.0px;font-size:16px;line-height:16px;font-weight:400;color:#30363e;transform:scaleX(0.9804);transform-origin:0 0;-webkit-text-stroke:0.3px #30363e;">Required stages and tasks for completing this plan</div>
<div class="t" style="left:70.82px;top:302.0px;font-size:18.6px;line-height:18.6px;font-weight:700;color:#111316;transform:scaleX(0.9281);transform-origin:0 0;">First Day of Work</div>
<div class="t" style="left:70.78px;top:332.0px;font-size:16px;line-height:16px;font-weight:400;color:#30363e;transform:scaleX(0.9655);transform-origin:0 0;-webkit-text-stroke:0.3px #30363e;">Use this checklist to ensure you are well-prepared to start your role and contribute to th…</div>
<div class="t" style="left:925.60px;top:333.0px;font-size:15px;line-height:15px;font-weight:400;color:#30363e;transform:scaleX(0.9455);transform-origin:0 0;-webkit-text-stroke:0.3px #30363e;">Apr 22</div>
<div class="t" style="left:110.03px;top:395.0px;font-size:16px;line-height:16px;font-weight:400;color:#111316;transform:scaleX(0.9746);transform-origin:0 0;-webkit-text-stroke:0.3px #111316;">Complete new hire paperwork and attend a health and safety induction.</div>
<div class="t" style="left:841.85px;top:395.0px;font-size:15px;line-height:15px;font-weight:400;color:#30363e;transform:scaleX(0.9514);transform-origin:0 0;-webkit-text-stroke:0.3px #30363e;">due: 13:30</div>
<div class="t" style="left:111.00px;top:459.0px;font-size:16px;line-height:16px;font-weight:400;color:#111316;transform:scaleX(0.9703);transform-origin:0 0;-webkit-text-stroke:0.3px #111316;">Take an office tour and meet your supervisor, teammates, and mentor.</div>
<div class="t" style="left:835.63px;top:460.0px;font-size:15px;line-height:15px;font-weight:400;color:#30363e;transform:scaleX(0.9707);transform-origin:0 0;-webkit-text-stroke:0.3px #30363e;">due: Apr 22</div>
<div class="t" style="left:110.03px;top:524.0px;font-size:16px;line-height:16px;font-weight:400;color:#111316;transform:scaleX(0.9660);transform-origin:0 0;-webkit-text-stroke:0.3px #111316;">Set up your laptop and workstation; receive your employee ID card and system access.</div>
<div class="t" style="left:835.63px;top:524.0px;font-size:15px;line-height:15px;font-weight:400;color:#30363e;transform:scaleX(0.9707);transform-origin:0 0;-webkit-text-stroke:0.3px #30363e;">due: Apr 22</div>
<div class="t" style="left:110.03px;top:588.0px;font-size:16px;line-height:16px;font-weight:400;color:#111316;transform:scaleX(0.9680);transform-origin:0 0;-webkit-text-stroke:0.3px #111316;">Review the company’s code of conduct, policies, and payroll schedule.</div>
<div class="t" style="left:835.63px;top:589.0px;font-size:15px;line-height:15px;font-weight:400;color:#30363e;transform:scaleX(0.9707);transform-origin:0 0;-webkit-text-stroke:0.3px #30363e;">due: Apr 22</div>
<div class="t" style="left:103.00px;top:648.0px;font-size:16px;line-height:16px;font-weight:400;color:#2b3038;transform:scaleX(0.9156);transform-origin:0 0;-webkit-text-stroke:0.3px #2b3038;">Add Task…</div>
<div class="t" style="left:71.75px;top:716.0px;font-size:18.6px;line-height:18.6px;font-weight:700;color:#111316;transform:scaleX(0.9263);transform-origin:0 0;">Week 1 — Breaking Down the Sales Funnel</div>
<div class="t" style="left:71.75px;top:746.0px;font-size:16px;line-height:16px;font-weight:400;color:#30363e;transform:scaleX(0.9765);transform-origin:0 0;-webkit-text-stroke:0.3px #30363e;">You will look at each part of the sales funnel, from attracting leads to turning them into…</div>
<div class="t" style="left:864.60px;top:747.0px;font-size:15px;line-height:15px;font-weight:400;color:#30363e;transform:scaleX(0.9327);transform-origin:0 0;-webkit-text-stroke:0.3px #30363e;">Apr 22 — Apr 26</div>
<div class="t" style="left:110.03px;top:809.0px;font-size:16px;line-height:16px;font-weight:400;color:#111316;transform:scaleX(0.9726);transform-origin:0 0;-webkit-text-stroke:0.3px #111316;">Learn about the sales funnel and how to track activities and reports in the CRM.</div>
<div class="t" style="left:769.65px;top:809.0px;font-size:15px;line-height:15px;font-weight:400;color:#30363e;transform:scaleX(0.9507);transform-origin:0 0;-webkit-text-stroke:0.3px #30363e;">due: Apr 24, 11:59 PM</div>
<div class="t" style="left:110.02px;top:873.0px;font-size:16px;line-height:16px;font-weight:400;color:#111316;transform:scaleX(0.9756);transform-origin:0 0;-webkit-text-stroke:0.3px #111316;">Review sales compensation plans with your supervisor.</div>
<div class="t" style="left:777.76px;top:874.0px;font-size:15px;line-height:15px;font-weight:400;color:#30363e;transform:scaleX(0.9403);transform-origin:0 0;-webkit-text-stroke:0.3px #30363e;">due: Apr 25, 2:15 PM</div>
<div class="t" style="left:110.02px;top:938.0px;font-size:16px;line-height:16px;font-weight:400;color:#111316;transform:scaleX(0.9792);transform-origin:0 0;-webkit-text-stroke:0.3px #111316;">Listen to recorded sales calls daily.</div>
<div class="t" style="left:777.76px;top:938.0px;font-size:15px;line-height:15px;font-weight:400;color:#30363e;transform:scaleX(0.9403);transform-origin:0 0;-webkit-text-stroke:0.3px #30363e;">due: Apr 25, 4:00 PM</div>
<div class="t" style="left:110.02px;top:1002.0px;font-size:16px;line-height:16px;font-weight:400;color:#111316;transform:scaleX(0.9815);transform-origin:0 0;-webkit-text-stroke:0.3px #111316;">Study product pricing and its impact on sales strategies.</div>
<div class="t" style="left:777.76px;top:1003.0px;font-size:15px;line-height:15px;font-weight:400;color:#30363e;transform:scaleX(0.9403);transform-origin:0 0;-webkit-text-stroke:0.3px #30363e;">due: Apr 26, 3:00 PM</div>
<div class="t" style="left:103.00px;top:1063.0px;font-size:16px;line-height:16px;font-weight:400;color:#2b3038;transform:scaleX(0.9156);transform-origin:0 0;-webkit-text-stroke:0.3px #2b3038;">Add Task…</div>
<div class="t" style="left:1102.41px;top:362.0px;font-size:12.5px;line-height:12.5px;font-weight:700;color:#0d0f10;transform:scaleX(1.0875);transform-origin:0 0;">ispring</div>
<div class="t" style="left:1148.98px;top:362.0px;font-size:12.5px;line-height:12.5px;font-weight:400;color:#127a30;transform:scaleX(1.2231);transform-origin:0 0;-webkit-text-stroke:0.2px #127a30;">learn</div>
<div class="t" style="left:1170.00px;top:445.0px;font-size:6px;line-height:6px;font-weight:700;color:#111;transform:scaleX(0.8297);transform-origin:0 0;">PDP Sales Representative</div>
<div class="t" style="left:1247.20px;top:445.0px;font-size:6px;line-height:6px;font-weight:700;color:#111;transform:scaleX(0.8360);transform-origin:0 0;">Duration · 2 Week</div>
<div class="t" style="left:1164.39px;top:464.0px;font-size:21px;line-height:21px;font-weight:700;color:#0d0f10;transform:scaleX(0.9076);transform-origin:0 0;">Sales Representative</div>
<div class="t" style="left:1171.60px;top:506.0px;font-size:7px;line-height:7px;font-weight:400;color:#ffffff;transform:scaleX(0.9893);transform-origin:0 0;">Continue</div>
<div class="t" style="left:1227.90px;top:507.0px;font-size:6.3px;line-height:6.3px;font-weight:700;color:#111;transform:scaleX(0.8512);transform-origin:0 0;">Completed tasks: 0 out of 50</div>
<div class="t" style="left:1165.20px;top:600.0px;font-size:11px;line-height:11px;font-weight:700;color:#111;transform:scaleX(0.8519);transform-origin:0 0;">To-Do List</div>
<div class="t" style="left:1174.60px;top:635.0px;font-size:8.3px;line-height:8.3px;font-weight:400;color:#111;transform:scaleX(0.9312);transform-origin:0 0;-webkit-text-stroke:0.25px #111;">First Day of Work</div>
<div class="t" style="left:1174.30px;top:648.0px;font-size:6.4px;line-height:6.4px;font-weight:400;color:#7a7f86;transform:scaleX(0.9833);transform-origin:0 0;">Apr 22</div>
<div class="t" style="left:1174.60px;top:681.0px;font-size:8.3px;line-height:8.3px;font-weight:400;color:#111;transform:scaleX(0.9111);transform-origin:0 0;-webkit-text-stroke:0.25px #111;">Week 1 — Breaking Down the Sales Funnel</div>
<div class="t" style="left:1174.30px;top:694.0px;font-size:6.4px;line-height:6.4px;font-weight:400;color:#7a7f86;transform:scaleX(0.9574);transform-origin:0 0;">Apr 22 — Apr 26</div>
<div class="t" style="left:1174.60px;top:725.0px;font-size:8.3px;line-height:8.3px;font-weight:400;color:#111;transform:scaleX(0.9205);transform-origin:0 0;-webkit-text-stroke:0.25px #111;">Week 2 —  Setting Up for Sales Success</div>
<div class="t" style="left:1174.30px;top:738.0px;font-size:6.4px;line-height:6.4px;font-weight:400;color:#7a7f86;transform:scaleX(0.9478);transform-origin:0 0;">Apr 28 — May 2</div>
<div class="t" style="left:1533.20px;top:600.0px;font-size:11px;line-height:11px;font-weight:700;color:#111;transform:scaleX(0.8620);transform-origin:0 0;">Ask a Question</div>
<div class="t" style="left:1559.95px;top:660.0px;font-size:6.5px;line-height:6.5px;font-weight:400;color:#6b7077;transform:scaleX(1.0050);transform-origin:0 0;">Mentor</div>
<div class="t" style="left:1553.25px;top:670.0px;font-size:7.3px;line-height:7.3px;font-weight:700;color:#111;transform:scaleX(0.8816);transform-origin:0 0;">Ava Brown</div>
<div class="t" style="left:1620.63px;top:660.0px;font-size:6.5px;line-height:6.5px;font-weight:400;color:#6b7077;transform:scaleX(1.0667);transform-origin:0 0;">Supervisor</div>
<div class="t" style="left:1614.20px;top:670.0px;font-size:7.3px;line-height:7.3px;font-weight:700;color:#111;transform:scaleX(0.9216);transform-origin:0 0;">Caleb Williams</div>
</div></div>
</body></html>
